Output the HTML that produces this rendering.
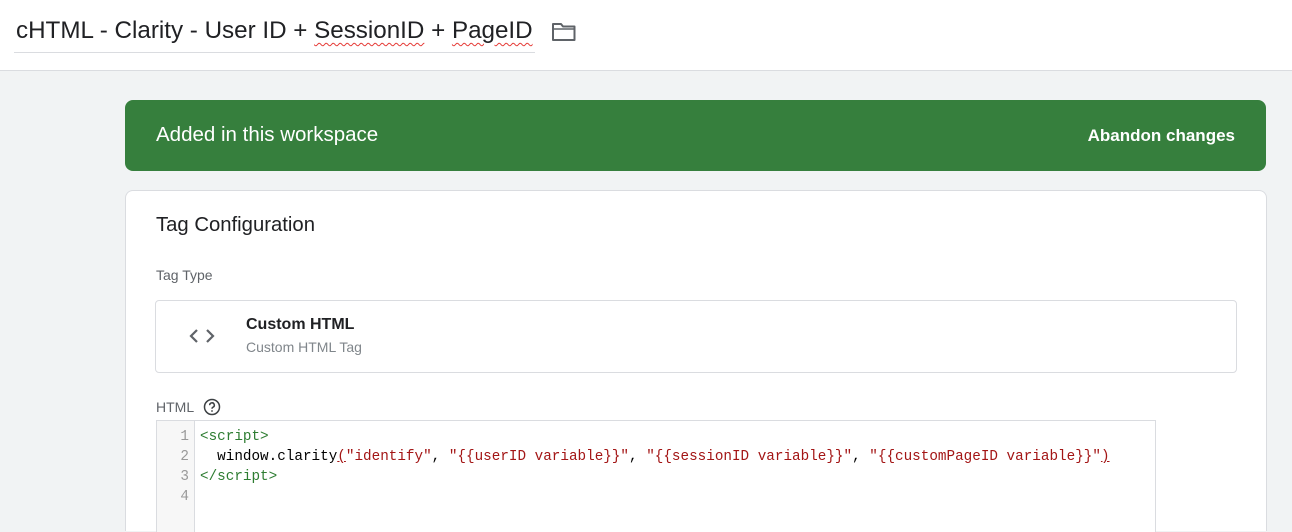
<!DOCTYPE html>
<html style="overflow:hidden;height:532px"><head><style>
body{margin:0;width:1292px;height:532px;overflow:hidden;background:#f1f3f4;font-family:"Liberation Sans",sans-serif;position:relative}
.top{position:absolute;left:0;top:0;width:1292px;height:70px;background:#fff;border-bottom:1px solid #dadce0}
.title{position:absolute;left:16px;top:17px;font-size:24.2px;color:#202124;white-space:nowrap}
.title .sq{text-decoration:underline wavy #e53935;text-decoration-thickness:1px;text-underline-offset:4px}
.uline{position:absolute;left:14px;top:52px;width:521px;height:1px;background:#dadce0}
.banner{position:absolute;left:125px;top:100px;width:1141px;height:71px;background:#367f3d;border-radius:8px;color:#fff}
.banner .l{position:absolute;left:31px;top:23px;font-size:20.5px}
.banner .r{position:absolute;right:31px;top:26px;font-size:17px;font-weight:bold}
.card{position:absolute;left:125px;top:190px;width:1140px;height:340px;background:#fff;border:1px solid #dadce0;border-bottom:none;border-radius:8px 8px 0 0}
.h{position:absolute;left:30px;top:23px;font-size:20.3px;color:#202124}
.tt{position:absolute;left:30px;top:76px;font-size:14px;color:#5f6368}
.box{position:absolute;left:29px;top:109px;width:1080px;height:71px;border:1px solid #dadce0;border-radius:4px}
.n1{position:absolute;left:90px;top:15px;font-size:16px;font-weight:bold;color:#202124}
.n2{position:absolute;left:90px;top:38px;font-size:14px;color:#80868b}
.hl{position:absolute;left:30px;top:207px;font-size:14px;color:#5f6368}
.ed{position:absolute;left:30px;top:229px;width:998px;height:112px;border:1px solid #dadce0;border-bottom:none;background:#fff}
.gut{position:absolute;left:0;top:0;width:37px;height:112px;background:#f7f7f7;border-right:1px solid #dadce0}
.code{position:absolute;top:6px;font-family:"Liberation Mono",monospace;font-size:14.3px;line-height:20px;white-space:pre}
.g{color:#2e7d32}.s{color:#a31515}
</style></head><body>
<div class="top"><div class="title">cHTML - Clarity - User ID + <span class="sq">SessionID</span> + <span class="sq">PageID</span></div>
<div class="uline"></div>
<svg style="position:absolute;left:551px;top:21px" width="26" height="22" viewBox="0 0 26 22"><path d="M2 3h8l2 2.5h11.5v13.5h-21.5z" fill="none" stroke="#5f6368" stroke-width="2" stroke-linejoin="round"/><path d="M2 8h21.5" stroke="#5f6368" stroke-width="1.5"/></svg>
</div>
<div class="banner"><div class="l">Added in this workspace</div><div class="r">Abandon changes</div></div>
<div class="card">
<div class="h">Tag Configuration</div>
<div class="tt">Tag Type</div>
<div class="box">
<svg style="position:absolute;left:32px;top:25px" width="28" height="20" viewBox="0 0 28 20"><path d="M9 4l-6 6 6 6M19 4l6 6-6 6" fill="none" stroke="#5f6368" stroke-width="2.2"/></svg>
<div class="n1">Custom HTML</div><div class="n2">Custom HTML Tag</div></div>
<div class="hl">HTML <svg style="vertical-align:-4px;margin-left:6px" width="18" height="18" viewBox="0 0 18 18"><circle cx="9" cy="9" r="7.5" fill="none" stroke="#3c4043" stroke-width="1.5"/><path d="M6.7 7.2a2.3 2.3 0 1 1 3.3 2c-.8.4-1 .9-1 1.6" fill="none" stroke="#3c4043" stroke-width="1.5"/><circle cx="9" cy="13" r=".9" fill="#3c4043"/></svg></div>
<div class="ed"><div class="gut"><div class="code" style="left:0;width:32px;text-align:right;color:#999">1
2
3
4</div></div>
<div class="code" style="left:43px"><span class="g">&lt;script&gt;</span>
  window.clarity<span style="color:#a31515;text-decoration:underline">(</span><span class="s">"identify"</span>, <span class="s">"{{userID variable}}"</span>, <span class="s">"{{sessionID variable}}"</span>, <span class="s">"{{customPageID variable}}"</span><span style="color:#a31515;text-decoration:underline">)</span>
<span class="g">&lt;/script&gt;</span>
</div></div>
</div>
</body></html>
